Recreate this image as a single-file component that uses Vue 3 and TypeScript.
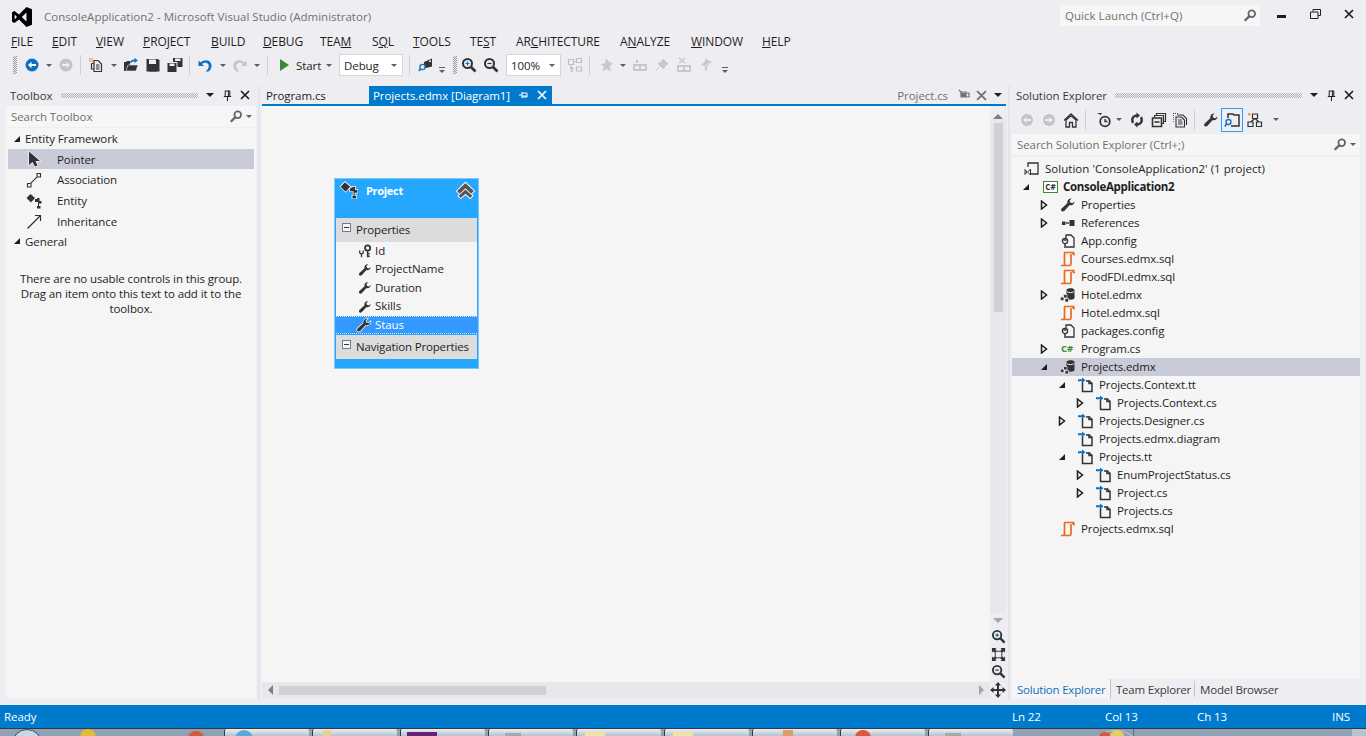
<script setup lang="ts">
import { h, computed } from 'vue'
import type { FunctionalComponent } from 'vue'

const Ico: FunctionalComponent<{ n: string; s?: number }> = (props) =>
  h('svg', { width: props.s ?? 16, height: props.s ?? 16, class: 'ico' }, [h('use', { href: '#' + props.n })])
Ico.props = ['n', 's']

const menus = [
  { pre: '', u: 'F', post: 'ILE', x: 11 }, { pre: '', u: 'E', post: 'DIT', x: 52 }, { pre: '', u: 'V', post: 'IEW', x: 96 },
  { pre: '', u: 'P', post: 'ROJECT', x: 143 }, { pre: '', u: 'B', post: 'UILD', x: 211 }, { pre: '', u: 'D', post: 'EBUG', x: 263 },
  { pre: 'TEA', u: 'M', post: '', x: 320 }, { pre: 'S', u: 'Q', post: 'L', x: 372 }, { pre: '', u: 'T', post: 'OOLS', x: 413 },
  { pre: 'TE', u: 'S', post: 'T', x: 470 }, { pre: 'AR', u: 'C', post: 'HITECTURE', x: 516 }, { pre: 'A', u: 'N', post: 'ALYZE', x: 620 },
  { pre: '', u: 'W', post: 'INDOW', x: 691 }, { pre: '', u: 'H', post: 'ELP', x: 762 }
]
const menuCells = computed(() => menus.map((m, i) => ({ ...m, w: (menus[i + 1]?.x ?? 820) - m.x })))

type Tool = { k: string; x: number; n?: string; t?: string; w?: number; s?: number }
function cells(list: Tool[], end: number) {
  return list.map((c, i) => ({ ...c, cw: (list[i + 1]?.x ?? end) - c.x }))
}
const mainTools = cells([
  { k: 'grip', x: 13 }, { k: 'i', x: 24, n: 'back' }, { k: 'a', x: 46 }, { k: 'i', x: 58, n: 'fwd' }, { k: 's', x: 80 },
  { k: 'i', x: 88, n: 'newp' }, { k: 'a', x: 111 }, { k: 'i', x: 123, n: 'open' }, { k: 'i', x: 145, n: 'save' }, { k: 'i', x: 167, n: 'saveall' },
  { k: 's', x: 189 }, { k: 'i', x: 197, n: 'undo' }, { k: 'a', x: 220 }, { k: 'i', x: 232, n: 'redo' }, { k: 'a', x: 254 }, { k: 's', x: 267 },
  { k: 'i', x: 276, n: 'play' }, { k: 't', x: 296, t: 'Start' }, { k: 'a', x: 326 }, { k: 'c', x: 339, t: 'Debug', w: 64 }, { k: 's', x: 409 },
  { k: 'i', x: 418, n: 'findf' }, { k: 'o', x: 438 }, { k: 'grip', x: 453 }, { k: 'i', x: 461, n: 'zin' }, { k: 'i', x: 483, n: 'zout' },
  { k: 'c', x: 506, t: '100%', w: 55 }, { k: 'i', x: 567, n: 'diag' }, { k: 's', x: 589 }, { k: 'i', x: 599, n: 'dpin' }, { k: 'a', x: 620 },
  { k: 'i', x: 632, n: 'dlink' }, { k: 'i', x: 654, n: 'dpin2' }, { k: 'i', x: 676, n: 'dunlink' }, { k: 'i', x: 698, n: 'dstar' }, { k: 'o', x: 721 }
], 740)
const seTools = cells([
  { k: 'i', x: 1019, n: 'fwdgb' }, { k: 'i', x: 1041, n: 'fwdg' }, { k: 'i', x: 1063, n: 'home' }, { k: 's', x: 1085 }, { k: 'i', x: 1096, n: 'sync' },
  { k: 'a', x: 1116 }, { k: 'i', x: 1129, n: 'refresh' }, { k: 'i', x: 1151, n: 'coll' }, { k: 'i', x: 1172, n: 'showf' }, { k: 's', x: 1194 },
  { k: 'i', x: 1203, n: 'wrench' }, { k: 'sel', x: 1221, n: 'filt' }, { k: 'i', x: 1247, n: 'cls' }, { k: 'a', x: 1273 }
], 1290)

const tree = [
  { l: 0, e: '', i: 'sln', t: "Solution 'ConsoleApplication2' (1 project)", w: true },
  { l: 1, e: 'o', i: 'proj', t: 'ConsoleApplication2', b: true },
  { l: 2, e: 'c', i: 'wrench', t: 'Properties' },
  { l: 2, e: 'c', i: 'refs', t: 'References' },
  { l: 2, e: '', i: 'conf', t: 'App.config' },
  { l: 2, e: '', i: 'sql', t: 'Courses.edmx.sql' },
  { l: 2, e: '', i: 'sql', t: 'FoodFDI.edmx.sql' },
  { l: 2, e: 'c', i: 'edmx', t: 'Hotel.edmx' },
  { l: 2, e: '', i: 'sql', t: 'Hotel.edmx.sql' },
  { l: 2, e: '', i: 'conf', t: 'packages.config' },
  { l: 2, e: 'c', i: 'cs', t: 'Program.cs' },
  { l: 2, e: 'o', i: 'edmx', t: 'Projects.edmx', sel: true },
  { l: 3, e: 'o', i: 'gen', t: 'Projects.Context.tt' },
  { l: 4, e: 'c', i: 'gen', t: 'Projects.Context.cs' },
  { l: 3, e: 'c', i: 'gen', t: 'Projects.Designer.cs' },
  { l: 3, e: '', i: 'gen', t: 'Projects.edmx.diagram' },
  { l: 3, e: 'o', i: 'gen', t: 'Projects.tt' },
  { l: 4, e: 'c', i: 'gen', t: 'EnumProjectStatus.cs' },
  { l: 4, e: 'c', i: 'gen', t: 'Project.cs' },
  { l: 4, e: '', i: 'gen', t: 'Projects.cs' },
  { l: 2, e: '', i: 'sql', t: 'Projects.edmx.sql' }
]
const tools = [
  { i: 'ptr', t: 'Pointer', sel: true },
  { i: 'assoc', t: 'Association' },
  { i: 'ent', t: 'Entity' },
  { i: 'inh', t: 'Inheritance' }
]
const props = [
  { i: 'key', t: 'Id' }, { i: 'wrench', t: 'ProjectName' }, { i: 'wrench', t: 'Duration' }, { i: 'wrench', t: 'Skills' }
]
const tasks = [
  { c: 'blue' }, { c: 'yellowg' }, { c: 'purple' }, { c: 'gray' }, { c: 'yellow' }, { c: 'yellow' }, { c: 'orange' }, { c: 'red' }, { c: 'gray' }
]
</script>

<template>
  <div class="app">
    <svg class="defs" aria-hidden="true">
      <symbol id="vs" viewBox="0 0 20 20"><path fill="#000" fill-rule="evenodd" d="M14.5 0 20 2.3V17.7L14.5 20 7 12.6 2.4 16 0 14.8V5.2L2.4 4 7 7.4ZM14.5 5.6 9.8 10l4.7 4.4ZM2.6 7.6V12.4L5 10Z"/></symbol>
      <symbol id="back" viewBox="0 0 16 16"><circle cx="8" cy="8" r="6.5" fill="#0e70c0"/><path d="M4 8 7.5 4.8V7H12V9H7.5V11.2Z" fill="#fff"/></symbol>
      <symbol id="fwd" viewBox="0 0 16 16"><circle cx="8" cy="8" r="6.5" fill="#c4c4c8"/><path d="M12 8 8.500 4.800V7H4V9H8.500V11.200Z" fill="#eeeef2"/></symbol>
      <symbol id="fwdgb" viewBox="0 0 16 16"><circle cx="8" cy="8" r="6" fill="#c4c4c8"/><path d="M4 8 7.500 5V7H12V9H7.500V11Z" fill="#eeeef2"/></symbol>
      <symbol id="fwdg" viewBox="0 0 16 16"><circle cx="8" cy="8" r="6" fill="#c4c4c8"/><path d="M12 8 8.500 5V7H4V9H8.500V11Z" fill="#eeeef2"/></symbol>
      <symbol id="newp" viewBox="0 0 16 16"><path d="M1 1H5V5H1Z" fill="#e8a15a"/><path d="M1.500 2H2.500M3.500 2H4.500M2.500 3H3.500M1.500 4H2.500M3.500 4H4.500" stroke="#fff"/><path d="M6 3.500H10L13.500 7V14.500H6ZM3.500 6.500H6M3.500 6.500V12H6" fill="none" stroke="#333" stroke-width="1.200"/><path d="M8 8H11.500M8 10H11.500M8 12H11.500" stroke="#333"/></symbol>
      <symbol id="open" viewBox="0 0 16 16"><path d="M1 5H3L4 4H7V14H1Z" fill="#333"/><path d="M3 14 5 8H15L13 14Z" fill="#333" stroke="#eeeef2" stroke-width=".6"/><path d="M7 6C7 3.500 9 2.500 11.500 2.500V.8L15 3.500 11.500 6V4.500C10 4.500 8.800 5 8 6Z" fill="#1b74c0"/></symbol>
      <symbol id="save" viewBox="0 0 16 16"><path d="M1.500 2H13L14.500 3.500V14.500H1.500Z" fill="#333"/><path d="M4 2.500H11V7H4Z" fill="#eeeef2"/><path d="M4 10H12V14.500H4Z" fill="#333"/></symbol>
      <symbol id="saveall" viewBox="0 0 16 16"><path d="M0.500 6H9.500V15H0.500Z" fill="#333"/><path d="M2.500 6.500H7.500V9H2.500Z" fill="#eeeef2"/><path d="M6 1H15.500V10H10.500V5H6Z" fill="#333"/><path d="M8 1.500H13.500V4H8Z" fill="#eeeef2"/></symbol>
      <symbol id="undo" viewBox="0 0 16 16"><path d="M1.500 3.500V9H7L5 7C7 5 10.500 5.200 11.500 7.500 12.500 10 11 12.500 8.500 14.500H11.500C14.500 12.500 15.500 8.500 13.500 5.500 11.500 2.500 7 2.300 3.500 5.500Z" fill="#0e70c0"/></symbol>
      <symbol id="redo" viewBox="0 0 16 16"><path d="M14.500 3.500V9H9L11 7C9 5 5.500 5.200 4.500 7.500 3.500 10 5 12.500 7.500 14.500H4.500C1.500 12.500 .5 8.500 2.500 5.500 4.500 2.500 9 2.300 12.500 5.500Z" fill="#c4c4c8"/></symbol>
      <symbol id="play" viewBox="0 0 16 16"><path d="M4 2 13 8 4 14Z" fill="#388a34"/></symbol>
      <symbol id="findf" viewBox="0 0 16 16"><path d="M6 5 14 1.500V9.500L6 11.500Z" fill="#333"/><path d="M11 3.500H13V5H11Z" fill="#eeeef2"/><circle cx="4.500" cy="10" r="2.600" fill="#eeeef2" stroke="#1b74c0" stroke-width="1.400"/><path d="M2.700 11.800 .8 14" stroke="#1b74c0" stroke-width="1.800"/></symbol>
      <symbol id="zin" viewBox="0 0 16 16"><circle cx="6.500" cy="6.500" r="4.500" fill="#eeeef2" stroke="#333" stroke-width="2"/><path d="M4.500 6.500H8.500M6.500 4.500V8.500" stroke="#0e70c0" stroke-width="1.200"/><path d="M10 10 14.500 14.500" stroke="#333" stroke-width="2.600"/></symbol>
      <symbol id="zout" viewBox="0 0 16 16"><circle cx="6.500" cy="6.500" r="4.500" fill="#eeeef2" stroke="#333" stroke-width="2"/><path d="M4.500 6.500H8.500" stroke="#333" stroke-width="1.200"/><path d="M10 10 14.500 14.500" stroke="#333" stroke-width="2.600"/></symbol>
      <symbol id="diag" viewBox="0 0 16 16"><path d="M1.500 2.500H6.500V7.500H1.500ZM9.500 1.500H14.500V5.500H9.500ZM9.500 10H14.500V14H9.500ZM6.500 4.500H9.500" fill="none" stroke="#c0c0c4" stroke-width="1.200"/><path d="M3 8 7.500 12 5 12.500 6 15 4 15.500Z" fill="#c0c0c4"/></symbol>
      <symbol id="dpin" viewBox="0 0 16 16"><path d="M7 1.500 11 5.500 14 6 10.500 9.500 12 14.500 7.500 12 3.500 14.500 5 10 1.500 7 6 6.500Z" fill="#c8c8cc"/></symbol>
      <symbol id="dlink" viewBox="0 0 16 16"><path d="M4 3H6V6H4Z" fill="#c8c8cc"/><path d="M2 8H8V13H2ZM8 8H14V13H8Z" fill="none" stroke="#c8c8cc" stroke-width="2"/></symbol>
      <symbol id="dpin2" viewBox="0 0 16 16"><path d="M9 2 14 7 11.500 8 9.500 12 4 6.500 8 4.500ZM5 10 2 14" fill="#c8c8cc" stroke="#c8c8cc"/></symbol>
      <symbol id="dunlink" viewBox="0 0 16 16"><path d="M3 1 9 6M9 1 3 6" stroke="#c8c8cc" stroke-width="1.600"/><path d="M2 9H8V14H2ZM8 9H14V14H8Z" fill="none" stroke="#c8c8cc" stroke-width="2"/></symbol>
      <symbol id="dstar" viewBox="0 0 16 16"><path d="M8 1 11 4 14 4.500 10 8 8 15 6 9 3 8 6.500 5Z" fill="#c8c8cc"/><path d="M4 12 11 6" stroke="#eeeef2"/></symbol>
      <symbol id="home" viewBox="0 0 16 16"><path d="M8 1 15.500 8 14.500 9 8 3 1.500 9 .5 8Z" fill="#333"/><path d="M3 8 8 3.800 13 8V15H9.500V10.500H6.500V15H3Z" fill="#eeeef2" stroke="#333" stroke-width="1.300"/></symbol>
      <symbol id="sync" viewBox="0 0 16 16"><circle cx="9" cy="9.500" r="4.800" fill="none" stroke="#333" stroke-width="1.800"/><path d="M9 7V9.500H11.500" fill="none" stroke="#333" stroke-width="1.400"/><path d="M1 1H6L4.500 3 3 2Z" fill="#333"/></symbol>
      <symbol id="refresh" viewBox="0 0 16 16"><path d="M2 8C2 5 4.500 2.500 7.500 2.500V.5L11 3.500 7.500 6.500V4.800C5.500 4.800 4.500 6.200 4.500 8L5 10.500 2.800 11.500Z" fill="#333"/><path d="M14 8C14 11 11.500 13.500 8.500 13.500V15.500L5 12.500 8.500 9.500V11.200C10.500 11.200 11.500 9.800 11.500 8L11 5.500 13.200 4.500Z" fill="#333"/></symbol>
      <symbol id="coll" viewBox="0 0 16 16"><path d="M5.500 3.500V1.500H14.500V9.500H12.500M3.500 5.500V3.500H12.500V11.500H10.500" fill="none" stroke="#333" stroke-width="1.200"/><path d="M1.500 6H10.500V14.500H1.500Z" fill="#eeeef2" stroke="#333" stroke-width="1.600"/><path d="M3.500 10H8.500" stroke="#333" stroke-width="1.600"/></symbol>
      <symbol id="showf" viewBox="0 0 16 16"><path d="M1 1.500H6M1 3.500H1.800M1 5.500H1.800M1 7.500H1.800M1 9.500H1.800" stroke="#444" stroke-dasharray="1 1"/><path d="M4 5H9.500L12.500 8V15H4ZM5 3H11L14.500 6.500V13" fill="#eeeef2" stroke="#333" stroke-width="1.100"/><path d="M6 8H10M6 10H10.500M6 12H10.500" stroke="#333"/></symbol>
      <symbol id="wrench" viewBox="0 0 16 16"><path d="M14.500 4.500C14.500 7.200 12 8.800 9.700 8L4.500 13.700C3.600 14.700 2.100 14.700 1.500 14 .8 13.300 1 12 1.900 11.200L7.500 6C6.800 3.700 8.700 1.300 11.500 1.500L9.500 3.800 10.500 5.800 12.500 6.300Z" fill="#333"/></symbol>
      <symbol id="wrenchw" viewBox="0 0 16 16"><path d="M14.500 4.500C14.500 7.200 12 8.800 9.700 8L4.500 13.700C3.600 14.700 2.100 14.700 1.500 14 .8 13.300 1 12 1.900 11.200L7.500 6C6.800 3.700 8.700 1.300 11.500 1.500L9.500 3.800 10.500 5.800 12.500 6.300Z" fill="#333" stroke="#fff" stroke-width="1.300" paint-order="stroke"/></symbol>
      <symbol id="filt" viewBox="0 0 16 16"><path d="M4 6V2H9L10 3H15V14H7" fill="none" stroke="#333" stroke-width="1.500"/><circle cx="4.500" cy="10" r="2.500" fill="none" stroke="#1b74c0" stroke-width="1.400"/><path d="M2.700 12 .8 14.500" stroke="#1b74c0" stroke-width="1.800"/></symbol>
      <symbol id="cls" viewBox="0 0 16 16"><path d="M1 1H3.500V3.500H1Z" fill="#e8a15a"/><path d="M5.500 2H10.500V6.500H5.500ZM1 10H6V14.500H1ZM9.500 10H14.500V14.500H9.500ZM8 6.500 3.500 10M8 6.500 12 10" fill="none" stroke="#333" stroke-width="1.200"/></symbol>
      <symbol id="search" viewBox="0 0 16 16"><circle cx="10" cy="5.500" r="3.800" fill="none" stroke="#656565" stroke-width="2"/><path d="M7.300 8.200 2 13.500" stroke="#656565" stroke-width="2.600"/></symbol>
      <symbol id="sln" viewBox="0 0 16 16"><path d="M4 6V2H14V13H7" fill="none" stroke="#333" stroke-width="1.300"/><path d="M1 8.500 3 11 1 13.500ZM3.500 11 6.500 8V14Z" fill="none" stroke="#333"/></symbol>
      <symbol id="refs" viewBox="0 0 16 16"><path d="M2 6.500H5.500V10H2ZM9.500 5H14.500V11H9.500Z" fill="#333"/><path d="M6 8H9" stroke="#333" stroke-width="1.400"/></symbol>
      <symbol id="conf" viewBox="0 0 16 16"><path d="M6 5V2H11L14 5V14H6" fill="none" stroke="#333" stroke-width="1.300"/><circle cx="5" cy="8" r="2.600" fill="none" stroke="#333" stroke-width="1.300"/><path d="M5 10V15M3.500 7H6.500" stroke="#333" stroke-width="1.500"/></symbol>
      <symbol id="sql" viewBox="0 0 16 16"><path d="M1 14.500H5C4 14.500 4.500 13 4.500 12V2.500C4.500 1.500 5 1.500 6 1.500H14.500C13.500 1.500 13 2 13 3.500M13 3.500H15M4.500 13C4.500 14 5.500 14.500 6 14.500H9.500C10.500 14.500 11 14 11 13V3" fill="none" stroke="#ea6a1f" stroke-width="1.700"/></symbol>
      <symbol id="edmx" viewBox="0 0 16 16"><path d="M6.500 3C6.500 .8 14.500 .8 14.500 3V11C14.500 13.200 6.500 13.200 6.500 11Z" fill="#333"/><path d="M7 4.500C8.200 6 12.800 6 14 4.500" stroke="#eeeef2" fill="none"/><path d="M.5 10H4V13.500H.5ZM3.500 7.500H7V11H3.500ZM5 11.500H8.500V15H5Z" fill="#333" stroke="#eeeef2" stroke-width=".7"/></symbol>
      <symbol id="gen" viewBox="0 0 16 16"><path d="M4.500 5V14.500H14V6.500H11V4H8" fill="none" stroke="#333" stroke-width="1.500"/><path d="M14 6.500 11 3.500" stroke="#333" stroke-width="1.200"/><path d="M0 2.300H4V.5L7.500 3.200 4 6V4.200H0Z" fill="#0e70c0"/></symbol>
      <symbol id="ctri" viewBox="0 0 8 10"><path d="M1.500 1 6.500 5 1.500 9Z" fill="#f5f5f5" stroke="#1e1e1e" stroke-width="1.500"/></symbol>
      <symbol id="ptr" viewBox="0 0 16 16"><path d="M3 .5V14L6.500 11 9 15.500 11.500 14.500 9.500 10H14Z" fill="#333" stroke="#fff" stroke-width="1.200" paint-order="stroke"/></symbol>
      <symbol id="assoc" viewBox="0 0 16 16"><path d="M1.500 11.500H5V15H1.500ZM11 1.500H14.500V5H11ZM4.800 11.200 11.200 4.800" fill="none" stroke="#333" stroke-width="1.100"/></symbol>
      <symbol id="ent" viewBox="0 0 16 16"><path d="M.5 5 4.500 1 9 5 5 9.500ZM9 6H11V5H13.500V8H15.500V10.500H13V13H14.500V15.500H11V13H12V9H9Z" fill="#333"/></symbol>
      <symbol id="entw" viewBox="0 0 16 16"><path d="M.5 5 4.500 1 9 5 5 9.500ZM9 6H11V5H13.500V8H15.500V10.500H13V13H14.500V15.500H11V13H12V9H9Z" fill="#333" stroke="#fff" stroke-width="1.300" paint-order="stroke"/></symbol>
      <symbol id="inh" viewBox="0 0 16 16"><path d="M9 1.500H14.500V7" fill="none" stroke="#333" stroke-width="1.200"/><path d="M1.500 14.500 14 2" stroke="#333" stroke-width="1.300"/></symbol>
      <symbol id="key" viewBox="0 0 16 16"><circle cx="11" cy="4.500" r="3" fill="none" stroke="#333" stroke-width="2"/><path d="M11 7V15M11 11H13.500M11 14H13.500" stroke="#333" stroke-width="1.700"/><path d="M2 7.500V10C2 11.500 6 11.500 6 10V7.500M4 11V15" fill="none" stroke="#333" stroke-width="1.500"/></symbol>
      <symbol id="chev" viewBox="0 0 18 16"><path d="M9 .8 17 8.500 14.500 11 9 5.800 3.500 11 1 8.500ZM9 7 15.500 13 13.500 15 9 11 4.500 15 2.500 13Z" fill="#555" stroke="#fff" stroke-width="1.800" paint-order="stroke"/></symbol>
      <symbol id="fit" viewBox="0 0 16 16"><path d="M1 1H6L4.500 2.500 6 4 4 6 2.500 4.500 1 6ZM15 1V6L13.500 4.500 12 6 10 4 11.500 2.500 10 1ZM1 15V10L2.500 11.500 4 10 6 12 4.500 13.500 6 15ZM15 15H10L11.500 13.500 10 12 12 10 13.500 11.500 15 10Z" fill="#333"/><path d="M4.500 4.500H11.500V11.500H4.500Z" fill="none" stroke="#333"/></symbol>
      <symbol id="move" viewBox="0 0 16 16"><path d="M8 0 11 3.500H9V7H12.500V5L16 8 12.500 11V9H9V12.500H11L8 16 5 12.500H7V9H3.500V11L0 8 3.500 5V7H7V3.500H5Z" fill="#333"/></symbol>
      <symbol id="close" viewBox="0 0 10 10"><path d="M1 1 9 9M9 1 1 9" stroke="currentColor" stroke-width="1.700" fill="none"/></symbol>
      <symbol id="pin" viewBox="0 0 10 12"><path d="M2.500 1H7.500V7H2.500ZM1 7H9M5 7V12M6 1.500V6.500" stroke="currentColor" stroke-width="1.100" fill="none"/></symbol>
      <symbol id="hpin" viewBox="0 0 10 10"><path d="M1 5H4M4 2V8M4 3H9V7H4M4 6H9" stroke="currentColor" fill="none"/></symbol>
      <symbol id="keepin" viewBox="0 0 12 12"><path d="M1 1 4 4M3 3H8V8H3ZM3 6H8M8 4H11V8H8" stroke="currentColor" fill="none" stroke-width="1.200"/><path d="M3 4H8V8H3Z" fill="currentColor"/></symbol>
    </svg>

    <header class="titlebar">
      <Ico n="vs" :s="20" class="vs" />
      <span class="apptitle">ConsoleApplication2 - Microsoft Visual Studio (Administrator)</span>
      <span class="spring"></span>
      <div class="quick">
        <span>Quick Launch (Ctrl+Q)</span>
        <Ico n="search" :s="14" />
      </div>
      <div class="winbtns">
        <span class="min"></span>
        <svg class="restore" width="11" height="10" viewBox="0 0 11 10"><path d="M3 2.500V.5H10.500V6.500H8M.5 3H8V9.500H.5Z" fill="none" stroke="#1e1e1e"/></svg>
        <Ico n="close" :s="10" class="wclose" />
      </div>
    </header>

    <nav class="menubar">
      <span v-for="m in menuCells" :key="m.x" class="menu" :style="{ width: m.w + 'px' }">{{ m.pre }}<u>{{ m.u }}</u>{{ m.post }}</span>
    </nav>

    <div class="toolbar">
      <template v-for="c in mainTools" :key="c.x">
        <span class="cell" :style="{ width: c.cw + 'px' }">
          <Ico v-if="c.k === 'i'" :n="c.n!" />
          <i v-else-if="c.k === 'a'" class="arrow"></i>
          <i v-else-if="c.k === 's'" class="sep"></i>
          <i v-else-if="c.k === 'grip'" class="grip"></i>
          <span v-else-if="c.k === 'o'" class="over"><i class="bar"></i><i class="arrow"></i></span>
          <span v-else-if="c.k === 't'" class="tbtext">{{ c.t }}</span>
          <span v-else-if="c.k === 'c'" class="combo" :style="{ width: c.w + 'px' }">{{ c.t }}<i class="arrow"></i></span>
        </span>
      </template>
    </div>

    <main class="dock">
      <section class="toolbox">
        <div class="ptitle">
          <span>Toolbox</span><i class="dots"></i>
          <i class="arrow big"></i><Ico n="pin" :s="11" class="tpin" /><Ico n="close" :s="10" class="tclose" />
        </div>
        <div class="psearch"><span>Search Toolbox</span><Ico n="search" :s="14" /><i class="arrow"></i></div>
        <div class="pbody">
          <div class="group"><i class="tri"></i>Entity Framework</div>
          <div v-for="t in tools" :key="t.t" class="titem" :class="{ sel: t.sel }">
            <Ico :n="t.i" /><span>{{ t.t }}</span>
          </div>
          <div class="group g2"><i class="tri"></i>General</div>
          <p class="empty">There are no usable controls in this group. Drag an item onto this text to add it to the toolbox.</p>
        </div>
      </section>

      <div class="split"></div>

      <section class="doc">
        <div class="tabs">
          <span class="tab">Program.cs</span>
          <span class="tab active">Projects.edmx [Diagram1]<span class="spring"></span><Ico n="hpin" :s="10" /><Ico n="close" :s="10" class="tabx" /></span>
          <span class="spring"></span>
          <span class="prev">Project.cs</span>
          <Ico n="keepin" :s="12" class="pv1" />
          <Ico n="close" :s="11" class="pv2" />
          <i class="arrow big pv3"></i>
        </div>
        <div class="canvasrow">
          <div class="canvas">
            <div class="entity">
              <div class="ehead"><Ico n="entw" :s="18" /><b>Project</b><span class="spring"></span><Ico n="chev" :s="19" /></div>
              <div class="comp"><i class="minus"></i>Properties</div>
              <div class="plist">
                <div v-for="p in props" :key="p.t" class="prop"><Ico :n="p.i" :s="14" /><span>{{ p.t }}</span></div>
              </div>
              <div class="prop active"><Ico n="wrenchw" :s="16" /><span>Staus</span></div>
              <div class="comp nav"><i class="minus"></i>Navigation Properties</div>
            </div>
          </div>
          <aside class="vscroll">
            <i class="sup"></i>
            <div class="vtrack"><span class="vthumb"></span></div>
            <i class="sdown"></i>
            <Ico n="zin" :s="15" class="zb" />
            <Ico n="fit" :s="15" class="zb fitb" />
            <Ico n="zout" :s="15" class="zb" />
          </aside>
        </div>
        <div class="hscroll">
          <i class="sleft"></i>
          <div class="htrack"><span class="hthumb"></span></div>
          <i class="sright"></i>
          <span class="mv"><Ico n="move" :s="16" /></span>
        </div>
      </section>

      <div class="split"></div>

      <section class="solution">
        <div class="ptitle">
          <span>Solution Explorer</span><i class="dots"></i>
          <i class="arrow big"></i><Ico n="pin" :s="11" class="tpin" /><Ico n="close" :s="10" class="tclose" />
        </div>
        <div class="setools">
          <span v-for="c in seTools" :key="c.x" class="cell" :style="{ width: c.cw + 'px' }">
            <Ico v-if="c.k === 'i'" :n="c.n!" />
            <i v-else-if="c.k === 'a'" class="arrow"></i>
            <i v-else-if="c.k === 's'" class="sep"></i>
            <span v-else-if="c.k === 'sel'" class="selbox"><Ico :n="c.n!" /></span>
          </span>
        </div>
        <div class="psearch se"><span>Search Solution Explorer (Ctrl+;)</span><Ico n="search" :s="14" /><i class="arrow"></i></div>
        <div class="tree">
          <div v-for="r in tree" :key="r.t + r.l" class="row" :class="{ sel: r.sel }" :style="{ paddingLeft: r.l * 18 + 'px' }">
            <span class="exp">
              <i v-if="r.e === 'o'" class="tri"></i>
              <Ico v-else-if="r.e === 'c'" n="ctri" :s="10" />
            </span>
            <span class="ticon">
              <span v-if="r.i === 'proj'" class="projic">C#</span>
              <span v-else-if="r.i === 'cs'" class="csic">C#</span>
              <Ico v-else :n="r.i" :s="16" />
            </span>
            <span class="rtext" :class="{ bold: r.b, wide: r.w }">{{ r.t }}</span>
          </div>
        </div>
        <div class="btabs">
          <span class="btab on">Solution Explorer</span>
          <span class="btab">Team Explorer</span>
          <span class="btab">Model Browser</span>
        </div>
      </section>
    </main>

    <footer class="status">
      <span class="ready">Ready</span>
      <span class="spring"></span>
      <span class="st ln">Ln 22</span>
      <span class="st col">Col 13</span>
      <span class="st ch">Ch 13</span>
      <span class="st ins">INS</span>
    </footer>

    <div class="taskbar">
      <div class="tstart">
        <i class="orb"></i><i class="qie"></i><i class="qch"></i>
      </div>
      <div v-for="(t, i) in tasks" :key="i" class="task"><i class="glyph" :class="t.c"></i></div>
      <div class="tray"><i class="tray1"></i><i class="tray3"></i><i class="tray2"></i><i class="tray4"></i></div>
      <div class="showd"></div>
    </div>
  </div>
</template>

<style>
html, body { margin: 0; padding: 0; overflow: hidden; background: #eeeef2; }
</style>

<style scoped>
.app { width: 1366px; height: 736px; background: #eeeef2; display: flex; flex-direction: column; overflow: hidden; position: relative;
  font-family: "Open Sans", "Liberation Sans", sans-serif; font-size: 11.5px; letter-spacing: -0.08px; color: #1e1e1e; }
.defs { position: absolute; width: 0; height: 0; }
.ico { display: block; flex: none; }
i { display: block; font-style: normal; }
.spring { flex: 1; }

.titlebar { height: 30px; display: flex; align-items: flex-start; flex: none; }
.vs { margin: 7px 0 0 12px; }
.apptitle { margin: 9px 0 0 12px; color: #717171; line-height: 16px; letter-spacing: 0.02px; }
.quick { width: 200px; height: 21px; margin-top: 5px; background: #f6f6f6; display: flex; align-items: center; justify-content: space-between; padding: 0 3px 0 5px; box-sizing: border-box; color: #717171; letter-spacing: 0.03px; }
.winbtns { width: 106px; display: flex; align-items: flex-start; position: relative; height: 30px; }
.min { width: 9px; height: 3px; background: #1e1e1e; margin: 15px 0 0 17px; }
.restore { margin: 9px 0 0 24px; }
.wclose { margin: 9px 0 0 23px; color: #1e1e1e; }

.menubar { height: 22px; display: flex; align-items: center; padding-left: 11px; flex: none; }
.menu { flex: none; font-size: 12px; white-space: nowrap; letter-spacing: -0.1px; }
.menu u { text-underline-offset: 1px; }

.toolbar { height: 26px; display: flex; align-items: center; padding-left: 13px; flex: none; }
.cell { display: flex; align-items: center; flex: none; height: 100%; }
.arrow { width: 0; height: 0; border-left: 3px solid transparent; border-right: 3px solid transparent; border-top: 3px solid #5e5e5e; flex: none; }
.arrow.big { border-left-width: 4px; border-right-width: 4px; border-top-width: 4px; border-top-color: #1e1e1e; }
.sep { width: 1px; height: 20px; background: #cfcfd6; }
.grip { width: 4px; height: 18px; background: repeating-conic-gradient(#9a9aa0 0 25%, transparent 0 50%) 0 0 / 2px 2px; }
.over { display: flex; flex-direction: column; gap: 2px; align-items: center; margin: 10px 0 0 0; width: 7px; }
.bar { width: 6px; height: 1px; background: #5e5e5e; }
.combo { box-sizing: border-box; height: 22px; background: #fff; border: 1px solid #d5d5dc; display: flex; align-items: center; justify-content: space-between; padding: 0 3px 0 4px; }
.combo .arrow { margin-right: 2px; }

.dock { height: 614px; margin-top: 8px; display: flex; padding-left: 6px; flex: none; }
.split { width: 6px; flex: none; background: linear-gradient(90deg, transparent 2px, #e3e3ec 2px, #e3e3ec 4px, transparent 4px); }
.toolbox { width: 250px; display: flex; flex-direction: column; }
.ptitle { height: 18px; display: flex; align-items: center; flex: none; padding-left: 4px; color: #3b3b3b; }
.dots { flex: 1; height: 5px; margin: 0 8px; background: repeating-conic-gradient(#b4b4ba 0 25%, transparent 0 50%) 0 0 / 2px 2px; }
.tpin { margin-left: 8px; color: #1e1e1e; }
.tclose { margin: 0 6px 0 7px; color: #1e1e1e; }
.psearch { height: 21px; margin-top: 2px; background: #f6f6f6; display: flex; align-items: center; padding: 0 4px 0 5px; flex: none; color: #717171; }
.psearch span { flex: 1; }
.psearch .ico { margin-right: 3px; }
.pbody { flex: 1; margin: 1px 0 2px; background: #f5f5f5; padding: 0 2px; min-height: 0; }
.group { height: 21px; display: flex; align-items: center; color: #1e1e1e; }
.group .tri { margin: 0 5px 0 6px; }
.group.g2 { height: 20px; margin-top: -1px; }
.tri { width: 0; height: 0; border-bottom: 6px solid #1e1e1e; border-left: 6px solid transparent; flex: none; }
.titem { height: 21px; display: flex; align-items: center; padding-left: 18px; }
.titem span { margin-left: 15px; }
.titem.sel { background: #cacbd9; height: 20px; }
.empty { margin: 20px 8px 0; text-align: center; line-height: 15px; color: #1e1e1e; letter-spacing: -0.11px; }

.doc { width: 744px; display: flex; flex-direction: column; padding-bottom: 2px; box-sizing: border-box; }
.tabs { height: 20px; border-bottom: 2px solid #007acc; display: flex; align-items: flex-end; flex: none; box-sizing: border-box; }
.tab { height: 18px; display: flex; align-items: center; padding: 0 4px; width: 107px; box-sizing: border-box; flex: none; }
.tab.active { background: #007acc; color: #fff; width: 183px; padding-right: 5px; }
.tabx { margin-left: 9px; }
.prev { color: #717171; align-self: center; }
.pv1 { margin: 0 0 0 10px; align-self: center; color: #717171; }
.pv2 { margin: 0 0 0 6px; align-self: center; color: #717171; }
.pv3 { margin: 0 4px 0 7px; align-self: center; border-top-color: #717171; }
.canvasrow { flex: 1; display: flex; min-height: 0; }
.canvas { flex: 1; background: #f5f5f5; position: relative; }
.vscroll { width: 16px; flex: none; display: flex; flex-direction: column; align-items: center; background: #eeeef2; }
.sup { width: 0; height: 0; margin-top: 8px; border-left: 5px solid transparent; border-right: 5px solid transparent; border-bottom: 5px solid #7a7f92; }
.vtrack { width: 16px; flex: 1; display: flex; justify-content: center; background: #e8e8ec; padding-top: 4px; box-sizing: border-box; }
.vthumb { width: 9px; height: 189px; background: #d0d1d7; }
.sdown { width: 0; height: 0; margin-top: 5px; margin-bottom: 6px; border-left: 5px solid transparent; border-right: 5px solid transparent; border-top: 5px solid #a4a5ae; }
.zb { margin-bottom: 3px; }
.fitb { margin-bottom: 2px; }
.hscroll { height: 16px; display: flex; align-items: center; flex: none; background: #e8e8ec; }
.sleft { width: 0; height: 0; margin-left: 6px; border-top: 5px solid transparent; border-bottom: 5px solid transparent; border-right: 5px solid #7a7f92; }
.htrack { width: 706px; height: 100%; display: flex; align-items: center; }
.hthumb { width: 267px; height: 9px; background: #d0d1d7; margin-left: 6px; }
.sright { width: 0; height: 0; border-top: 5px solid transparent; border-bottom: 5px solid transparent; border-left: 5px solid #a4a5ae; }
.mv { width: 16px; display: flex; justify-content: center; background: #eeeef2; height: 100%; align-items: center; margin-left: auto; }

.entity { position: absolute; left: 72px; top: 72px; width: 145px; height: 191px; box-sizing: border-box; background: #25a6ff; border: 1px solid #7cc7fa; padding: 39px 1px 0; }
.ehead { position: absolute; left: 5px; right: 3px; top: 2px; height: 18px; display: flex; align-items: center; color: #fff; }
.ehead b { margin-left: 8px; font-size: 11px; letter-spacing: -0.3px; }
.comp { height: 24px; background: #dcdcdc; display: flex; align-items: center; padding: 0 0 2px 6px; box-sizing: border-box; color: #1e1e1e; white-space: nowrap; letter-spacing: -0.15px; }
.minus { width: 7px; height: 7px; border: 1px solid #6d7d96; background: #f5f5f5; margin: -4px 5px 0 0; position: relative; flex: none; }
.minus::after { content: ""; position: absolute; left: 1px; right: 1px; top: 3px; height: 1px; background: #333; }
.plist { background: #f5f5f5; height: 74px; }
.prop { height: 18.5px; display: flex; align-items: center; padding-left: 22px; }
.prop span { margin: -2px 0 0 3px; }
.prop.active { background: #3399ff; color: #fff; height: 18px; padding-left: 20px; margin: 0 0 1px; box-sizing: border-box; border-top: 1px dotted #cfe6ff; border-bottom: 1px dotted #cfe6ff; }
.prop.active span { margin-left: 3px; }

.solution { width: 348px; display: flex; flex-direction: column; }
.setools { height: 27px; margin-top: 2px; display: flex; align-items: center; padding-left: 7px; flex: none; }
.selbox { width: 22px; height: 24px; border: 1px solid #3399ff; box-sizing: border-box; display: flex; align-items: center; justify-content: center; }
.psearch.se { margin-top: 1px; }
.tree { flex: 1; margin-top: 2px; background: #f5f5f5; padding-top: 3px; min-height: 0; }
.row { height: 18px; display: flex; align-items: center; white-space: nowrap; }
.row.sel { background: #cacbd9; }
.rtext { margin-top: -2px; letter-spacing: -0.12px; }
.rtext.wide { letter-spacing: 0.03px; }
.exp { width: 23px; margin-left: -10px; flex: none; display: flex; align-items: center; justify-content: center; padding-right: 11px; box-sizing: border-box; }
.ticon { width: 20px; flex: none; margin-left: -1px; margin-right: 1px; }
.projic { display: block; width: 13px; height: 10px; margin-left: 1px; border: 1px solid #388a34; background: #fff; font-size: 8px; line-height: 10px; font-weight: 700; text-align: center; color: #333; letter-spacing: 0; }
.csic { display: block; margin-left: 1px; font-size: 9.5px; line-height: 14px; font-weight: 700; color: #388a34; letter-spacing: 0; }
.rtext.bold { font-weight: 700; letter-spacing: -0.32px; }
.btabs { height: 20px; margin-bottom: 1px; display: flex; flex: none; align-items: stretch; letter-spacing: -0.22px; }
.btab { padding: 0 3px 0 5px; display: flex; align-items: center; white-space: nowrap; color: #3b3b3b; border-right: 1px solid #c4c4cc; margin: 2px 0; }
.btab:last-child { border-right: 0; }
.btab.on { background: #f5f5f5; color: #0e70c0; margin: 0 1px 0 0; border-right: 0; box-shadow: 1px 0 0 #c4c4cc; width: 98px; box-sizing: border-box; }

.status { height: 23px; margin-top: 5px; background: #007acc; color: #fff; display: flex; align-items: center; flex: none; }
.ready { margin-left: 4px; }
.st { flex: none; }
.ln { width: 93px; }
.col { width: 92px; }
.ch { width: 135px; }
.ins { width: 34px; }

.taskbar { height: 8px; flex: none; display: flex; background: #8ea2b5; border-top: 1px solid #33393f; box-sizing: border-box; overflow: hidden; }
.tstart { width: 224px; flex: none; position: relative; }
.orb { position: absolute; left: 12px; top: 0; width: 28px; height: 28px; border-radius: 50%; border: 1px solid #33506c; background: #c8d8e6; }
.qie { position: absolute; left: 80px; top: 0; width: 16px; height: 16px; border-radius: 50%; background: #e3b93a; }
.qch { position: absolute; left: 188px; top: 2px; width: 16px; height: 16px; border-radius: 50%; background: #d9573f; }
.task { width: 85px; margin-right: 3px; flex: none; background: linear-gradient(#e9eef3, #b4c3d1); border-radius: 2px 2px 0 0; border-left: 1px solid #33393f; box-sizing: border-box; position: relative; }
.glyph { position: absolute; top: 1px; left: 10px; height: 12px; width: 20px; }
.blue { background: #5aa7d8; border-radius: 50%; width: 18px; height: 18px; }
.yellowg { background: #e7d28b; width: 8px; }
.purple { background: #68217a; width: 30px; left: 6px; top: 3px; }
.gray { background: #a6a9a8; width: 16px; top: 4px; left: 16px; }
.yellow { background: #efe4a6; left: 8px; top: 3px; }
.orange { background: #d9a066; width: 10px; left: 30px; }
.red { background: #d9573f; width: 16px; height: 16px; border-radius: 50%; left: 14px; }
.tray { width: 336px; flex: none; position: relative; }
.tray1 { position: absolute; left: 68px; top: 1px; width: 60px; height: 60px; border-radius: 50%; border: 1px solid #b8c6d4; }
.tray2 { position: absolute; left: 94px; top: 1px; width: 14px; height: 14px; border-radius: 50%; background: #e6cf5e; }
.tray3 { position: absolute; left: 82px; top: 3px; width: 14px; height: 14px; border-radius: 50%; background: #d9573f; }
.tray4 { position: absolute; left: 117px; top: 0; width: 1px; height: 8px; background: #5d6f81; }
.showd { width: 14px; flex: none; background: #b6c4d2; }
</style>
